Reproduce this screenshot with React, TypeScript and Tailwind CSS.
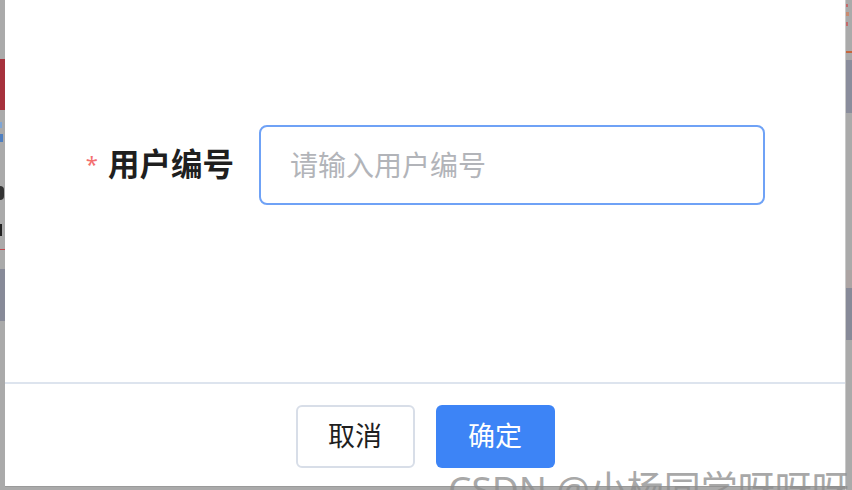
import { useState } from "react";

const font = { fontFamily: '"Noto Sans", "Noto Sans CJK SC", sans-serif' };

const LeftEdge = () => (
  <div className="w-[5px] h-full bg-[#aaaaaa] flex flex-col shrink-0">
    <div className="h-[59px]" />
    <div className="h-[51px] bg-[#a6313c]" />
    <div className="h-[12px]" />
    <div className="h-[6px] w-[2px] bg-[#7fa6d6]" />
    <div className="h-[6px]" />
    <div className="h-[8px] w-[3px] bg-[#4f7fc0]" />
    <div className="h-[44px]" />
    <div className="h-[14px] w-[4px] bg-[#333333] rounded-r-full" />
    <div className="h-[24px]" />
    <div className="h-[12px] w-[2px] bg-[#222222]" />
    <div className="h-[13px]" />
    <div className="h-[1px] bg-[#c0484f]" />
    <div className="h-[19px]" />
    <div className="h-[52px] bg-[#878a98]" />
  </div>
);

const RightEdge = () => (
  <div className="w-[7px] h-full bg-[#aaaaaa] flex flex-col shrink-0 border-l border-[#c9c9c9]">
    <div className="h-[4px]" />
    <div className="h-[3px] w-[2px] bg-[#c46a6a]" />
    <div className="h-[5px]" />
    <div className="h-[4px] w-[3px] bg-[#c98a70]" />
    <div className="h-[6px]" />
    <div className="h-[4px] w-[2px] bg-[#c46a6a]" />
    <div className="h-[25px]" />
    <div className="h-[2px] bg-[#c4663e]" />
    <div className="h-[7px]" />
    <div className="h-[53px] bg-[#8a8d9c]" />
    <div className="h-[157px]" />
    <div className="h-[18px] bg-[#aca4a3]" />
    <div className="h-[52px] bg-[#878a98]" />
  </div>
);

export default function App() {
  const [userNo, setUserNo] = useState("");

  return (
    <div
      className="relative w-[852px] h-[490px] overflow-hidden bg-[#aaaaaa] flex"
      style={font}
    >
      <LeftEdge />

      <div className="flex-1 h-[487px] bg-white flex flex-col border-b border-[#9a9a9a]">
        <div className="h-[382px] pt-[125px] flex items-start">
          <div className="w-[254px] h-[80px] flex items-center justify-end pr-[25px]">
            <span className="text-[22px] text-[#f36f6f] leading-none mr-[10px] mt-[-5px]">*</span>
            <span className="text-[31.5px] font-bold text-[#1f1f1f] leading-none mt-[-3px]">用户编号</span>
          </div>
          <input
            value={userNo}
            onChange={(e) => setUserNo(e.target.value)}
            placeholder="请输入用户编号"
            className="w-[506px] h-[80px] rounded-[8px] border-2 border-[#6fa2f6] px-[29px] text-[28px] text-[#303133] placeholder:text-[#b2b4b9] outline-none"
            style={font}
          />
        </div>

        <div className="h-[2px] bg-[#dde4ee]" />

        <div className="flex justify-center gap-[21px] pt-[21px]">
          <button className="w-[119px] h-[63px] rounded-[6px] border-2 border-[#d8dee8] bg-white text-[27px] text-[#1f1f1f]">
            取消
          </button>
          <button className="w-[119px] h-[63px] rounded-[6px] bg-[#3d84f6] text-[27px] text-white">
            确定
          </button>
        </div>
      </div>

      <RightEdge />

      <div className="absolute left-[448px] top-[470px] text-[37px] leading-none text-[#8c8c8c] opacity-75 whitespace-nowrap pointer-events-none">
        CSDN @小杨同学呀呀呀
      </div>
    </div>
  );
}
